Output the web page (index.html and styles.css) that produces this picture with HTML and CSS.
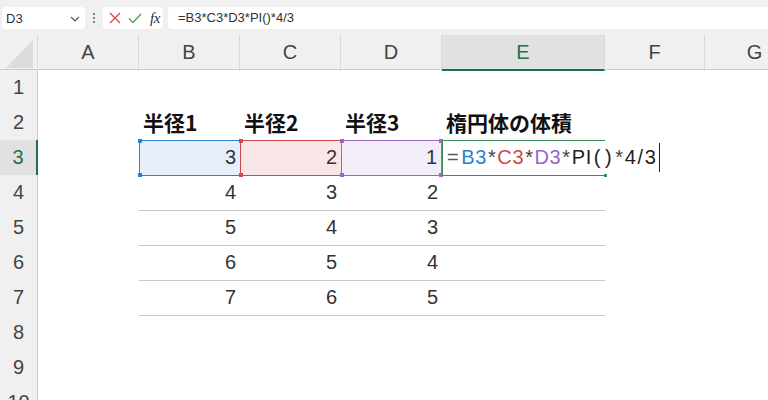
FILE: index.html
```html
<!DOCTYPE html>
<html lang="ja">
<head>
<meta charset="utf-8">
<title>Excel</title>
<link rel="stylesheet" href="styles.css">
</head>
<body>
<div class="toolbar">
  <div class="namebox">
    <span class="nb-text">D3</span>
    <svg class="chev" width="10" height="6" viewBox="0 0 10 6"><path d="M1 1 L5 5 L9 1" fill="none" stroke="#555" stroke-width="1.2"/></svg>
  </div>
  <div class="sep">
    <svg width="4" height="12" viewBox="0 0 4 12"><circle cx="2" cy="2" r="1.1" fill="#666"/><circle cx="2" cy="6" r="1.1" fill="#666"/><circle cx="2" cy="10" r="1.1" fill="#666"/></svg>
  </div>
  <div class="fxbox">
    <svg width="12" height="12" viewBox="0 0 12 12"><path d="M1 1 L11 11 M11 1 L1 11" stroke="#e0484e" stroke-width="1.4" fill="none"/></svg>
    <svg width="14" height="11" viewBox="0 0 14 11"><path d="M1 5.5 L5 9.5 L13 1" stroke="#4aa55a" stroke-width="1.4" fill="none"/></svg>
    <span class="fx">fx</span>
  </div>
  <div class="formula">=B3*C3*D3*PI()*4/3</div>
</div>
<div class="sheet">
  <div class="row colhead">
    <div class="corner"><svg width="30" height="30" viewBox="0 0 30 30"><path d="M28 1 L28 29 L1 29 Z" fill="#dcdcdc"/></svg></div>
    <div class="ch">A</div><div class="ch">B</div><div class="ch">C</div><div class="ch">D</div><div class="ch sel">E</div><div class="ch">F</div><div class="ch">G</div>
  </div>
  <div class="row">
    <div class="rh">1</div><div class="c"></div><div class="c"></div><div class="c"></div><div class="c"></div><div class="c"></div><div class="c"></div><div class="c"></div>
  </div>
  <div class="row">
    <div class="rh">2</div><div class="c"></div><div class="c hd">半径1</div><div class="c hd">半径2</div><div class="c hd">半径3</div><div class="c hd">楕円体の体積</div><div class="c"></div><div class="c"></div>
  </div>
  <div class="row">
    <div class="rh sel">3</div><div class="c"></div>
    <div class="c n hl hb"><span class="k tl"></span><span class="k bl"></span>3</div>
    <div class="c n hl hr"><span class="k tl"></span><span class="k bl"></span>2</div>
    <div class="c n hl hp"><span class="k tl"></span><span class="k bl"></span><span class="k tr"></span><span class="k br"></span>1</div>
    <div class="c active"><span class="eq">=</span><span class="rb">B3</span><span class="op">*</span><span class="rr">C3</span><span class="op">*</span><span class="rp">D3</span><span class="op">*</span>PI<span class="par">(</span><span class="par">)</span><span class="op">*</span>4<span class="sl">/</span>3<span class="caret"></span><span class="k gbr"></span></div>
    <div class="c"></div><div class="c"></div>
  </div>
  <div class="row">
    <div class="rh">4</div><div class="c"></div><div class="c n b">4</div><div class="c n b">3</div><div class="c n b">2</div><div class="c b"></div><div class="c"></div><div class="c"></div>
  </div>
  <div class="row">
    <div class="rh">5</div><div class="c"></div><div class="c n b">5</div><div class="c n b">4</div><div class="c n b">3</div><div class="c b"></div><div class="c"></div><div class="c"></div>
  </div>
  <div class="row">
    <div class="rh">6</div><div class="c"></div><div class="c n b">6</div><div class="c n b">5</div><div class="c n b">4</div><div class="c b"></div><div class="c"></div><div class="c"></div>
  </div>
  <div class="row">
    <div class="rh">7</div><div class="c"></div><div class="c n b">7</div><div class="c n b">6</div><div class="c n b">5</div><div class="c b"></div><div class="c"></div><div class="c"></div>
  </div>
  <div class="row">
    <div class="rh">8</div><div class="c"></div><div class="c"></div><div class="c"></div><div class="c"></div><div class="c"></div><div class="c"></div><div class="c"></div>
  </div>
  <div class="row">
    <div class="rh">9</div><div class="c"></div><div class="c"></div><div class="c"></div><div class="c"></div><div class="c"></div><div class="c"></div><div class="c"></div>
  </div>
  <div class="row">
    <div class="rh">10</div><div class="c"></div><div class="c"></div><div class="c"></div><div class="c"></div><div class="c"></div><div class="c"></div><div class="c"></div>
  </div>
</div>
</body>
</html>
```
FILE: styles.css
```css
html, body {
  margin: 0;
  padding: 0;
  width: 768px;
  height: 400px;
  overflow: hidden;
  background: #ffffff;
  font-family: "Liberation Sans", "Noto Sans CJK JP", sans-serif;
  color: #333;
}

.toolbar {
  height: 35px;
  box-sizing: border-box;
  padding-top: 7px;
  background: #f0f0f0;
  display: flex;
  align-items: flex-start;
}

.namebox {
  margin-left: 2px;
  width: 83px;
  height: 22px;
  background: #fff;
  border-radius: 4px;
  display: flex;
  align-items: center;
  justify-content: space-between;
  box-sizing: border-box;
  padding: 0 5px 0 4px;
}
.nb-text { font-size: 13px; color: #333; padding-top: 1px; }
.chev { margin-top: 1px; }

.sep {
  width: 18px;
  height: 22px;
  display: flex;
  align-items: center;
  justify-content: center;
}

.fxbox {
  width: 60px;
  height: 22px;
  background: #fff;
  border-radius: 4px;
  display: flex;
  align-items: center;
  box-sizing: border-box;
  padding-left: 6px;
  gap: 7px;
}
.fx {
  font-family: "Liberation Serif", serif;
  font-style: italic;
  font-size: 15px;
  color: #333;
  letter-spacing: -0.5px;
  margin-left: 1px;
}

.formula {
  margin-left: 5px;
  flex: 1;
  height: 22px;
  background: #fff;
  border-radius: 4px 0 0 4px;
  font-size: 13px;
  line-height: 22px;
  padding-left: 10px;
  color: #333;
}

.sheet { display: flex; flex-direction: column; }

.row {
  display: grid;
  grid-template-columns: 38px 101px 101px 101px 101px 163px 100px 100px;
  height: 35px;
}

.colhead {
  background: #f0f0f0;
  box-sizing: border-box;
  border-bottom: 1px solid #cbcbcb;
  height: 35px;
}
.corner {
  display: flex;
  align-items: flex-end;
  justify-content: flex-end;
  padding-right: 2px;
  padding-bottom: 2px;
  box-sizing: border-box;
  border-right: 1px solid #dadada;
}
.ch {
  font-size: 20px;
  color: #444;
  text-align: center;
  line-height: 34px;
  border-right: 1px solid #dadada;
  box-sizing: border-box;
}
.ch.sel {
  background: #e1e1e1;
  color: #217346;
  border-bottom: 2px solid #217346;
  line-height: 34px;
}

.rh {
  background: #f0f0f0;
  font-size: 20px;
  color: #444;
  text-align: center;
  line-height: 35px;
  box-sizing: border-box;
  border-right: 1px solid #cbcbcb;
  border-bottom: 1px solid #dadada;
}
.rh.sel {
  background: #e1e1e1;
  color: #217346;
  border-right: 2px solid #217346;
}

.c {
  box-sizing: border-box;
  position: relative;
  font-size: 20px;
  line-height: 35px;
  white-space: nowrap;
}
.n { text-align: right; padding-right: 4px; }
.b { border-bottom: 1px solid #c8c8c8; }
.hd {
  font-family: "Noto Sans CJK JP", sans-serif;
  font-weight: 700;
  font-size: 21px;
  padding-left: 4px;
  color: #111;
  line-height: 34px;
}

.hl { border: 1px solid; line-height: 33px; }
.hb { background: #e6eff9; border-color: #2f7fcf; border-right: none; }
.hr { background: #f9e7e7; border-color: #d04848; border-right: none; }
.hp { background: #f2edf8; border-color: #9a66c9; }

.k {
  position: absolute;
  width: 4px;
  height: 4px;
}
.hb .k { background: #2f7fcf; }
.hr .k { background: #d04848; }
.hp .k { background: #9a66c9; }
.tl { left: -2px; top: -2px; }
.bl { left: -2px; bottom: -2px; }
.tr { right: -2px; top: -2px; }
.br { right: -2px; bottom: -2px; }

.active {
  border-top: 1px solid #3d8a5c;
  border-left: 1px solid #3d8a5c;
  border-bottom: 1px solid #3d8a5c;
  padding-left: 4px;
  line-height: 33px;
  color: #222;
  overflow: visible;
  z-index: 2;
  letter-spacing: 0.6px;
}
.active .gbr { right: -2px; bottom: -2px; background: #3d8a5c; width: 3px; height: 3px; }
.eq { color: #555; margin-right: 2px; }
.op { color: #444; padding: 0 1px; }
.rb { color: #2f7fcf; }
.rr { color: #d04848; }
.rp { color: #9a66c9; }
.par { padding: 0 2px; }
.sl { padding: 0 1px; }
.caret {
  display: inline-block;
  width: 1px;
  height: 29px;
  background: #222;
  vertical-align: middle;
  margin-left: 3px;
  margin-top: -3px;
}
```
